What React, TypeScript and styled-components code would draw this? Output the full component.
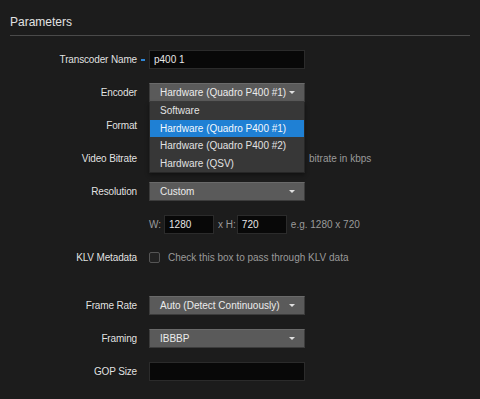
import React from "react";
import styled, { createGlobalStyle } from "styled-components";

const Global = createGlobalStyle`
  html, body { margin: 0; padding: 0; background: #1c1c1c; }
  body { font-family: "Liberation Sans", Arial, sans-serif; font-size: 10px; color: #dcdcdc; }
`;

const Page = styled.div`
  width: 480px;
  height: 399px;
  background: #1c1c1c;
  overflow: hidden;
  padding: 0 10px;
  box-sizing: border-box;
`;

const Title = styled.h2`
  margin: 0;
  padding: 15px 0 6px;
  font-size: 12px;
  font-weight: normal;
  color: #e2e2e2;
  line-height: 14px;
  border-bottom: 1px solid #4a4a4a;
`;

const Form = styled.div`
  display: flex;
  flex-direction: column;
  padding-top: 7px;
`;

const Row = styled.div<{ $gapTop?: number; $h?: number }>`
  display: flex;
  align-items: center;
  height: ${(p) => p.$h ?? 33}px;
  margin-top: ${(p) => p.$gapTop ?? 0}px;
`;

const Label = styled.div`
  width: 127px;
  flex: none;
  text-align: right;
  color: #e4e4e4;
  text-shadow: 0 0 1px rgba(0, 0, 0, 0.8);
  letter-spacing: -0.15px;
`;

const Marker = styled.div`
  width: 12px;
  flex: none;
  display: flex;
  justify-content: flex-start;
  padding-left: 4px;
  box-sizing: border-box;
`;

const Req = styled.span`
  display: block;
  width: 4px;
  height: 2px;
  background: #2f86d6;
`;

const Control = styled.div`
  position: relative;
  display: flex;
  align-items: center;
`;

const Input = styled.div<{ $w?: number }>`
  width: ${(p) => p.$w ?? 156}px;
  height: 19px;
  box-sizing: border-box;
  background: #080808;
  border: 1px solid #2b2b2b;
  color: #e6e6e6;
  padding-left: 4px;
  display: flex;
  align-items: center;
  flex: none;
`;

const Select = styled.div`
  width: 156px;
  height: 19px;
  box-sizing: border-box;
  background: #5a5a5a;
  border: 1px solid #3c3c3c;
  border-top-color: #6a6a6a;
  color: #ececec;
  padding: 0 9px 0 10px;
  display: flex;
  align-items: center;
  justify-content: space-between;
  flex: none;
`;

const Caret = styled.span`
  width: 0;
  height: 0;
  margin-left: auto;
  border-left: 3px solid transparent;
  border-right: 3px solid transparent;
  border-top: 3px solid #e0e0e0;
  flex: none;
`;

const Help = styled.span<{ $ml?: number }>`
  color: #9a9a9a;
  margin-left: ${(p) => p.$ml ?? 4}px;
  white-space: nowrap;
`;

const Small = styled.span<{ $ml?: number; $mr?: number }>`
  color: #9a9a9a;
  margin-left: ${(p) => p.$ml ?? 0}px;
  margin-right: ${(p) => p.$mr ?? 0}px;
  white-space: nowrap;
`;

const Checkbox = styled.span`
  width: 11px;
  height: 11px;
  box-sizing: border-box;
  border: 1px solid #555;
  border-radius: 2px;
  background: #222;
  flex: none;
`;

const Menu = styled.div`
  position: absolute;
  top: 19px;
  left: 0;
  width: 156px;
  box-sizing: border-box;
  background: #373737;
  border: 1px solid #262626;
  border-top: none;
  z-index: 5;
  box-shadow: 0 2px 4px rgba(0, 0, 0, 0.4);
`;

const Item = styled.div<{ $active?: boolean }>`
  height: 17.5px;
  display: flex;
  align-items: center;
  padding-left: 10px;
  color: ${(p) => (p.$active ? "#f4f8fc" : "#e2e2e2")};
  background: ${(p) => (p.$active ? "#1f80d4" : "transparent")};
`;

const options = [
  "Software",
  "Hardware (Quadro P400 #1)",
  "Hardware (Quadro P400 #2)",
  "Hardware (QSV)",
];

export default function App() {
  return (
    <Page>
      <Global />
      <Title>Parameters</Title>
      <Form>
        <Row>
          <Label>Transcoder Name</Label>
          <Marker>
            <Req />
          </Marker>
          <Control>
            <Input>p400 1</Input>
          </Control>
        </Row>
        <Row>
          <Label>Encoder</Label>
          <Marker />
          <Control>
            <Select>
              <span>Hardware (Quadro P400 #1)</span>
              <Caret />
            </Select>
            <Menu>
              {options.map((o) => (
                <Item key={o} $active={o === "Hardware (Quadro P400 #1)"}>
                  {o}
                </Item>
              ))}
            </Menu>
          </Control>
        </Row>
        <Row>
          <Label>Format</Label>
          <Marker />
          <Control>
            <Select>
              <Caret />
            </Select>
          </Control>
        </Row>
        <Row>
          <Label>Video Bitrate</Label>
          <Marker />
          <Control>
            <Input />
            <Help $ml={4}>bitrate in kbps</Help>
          </Control>
        </Row>
        <Row>
          <Label>Resolution</Label>
          <Marker />
          <Control>
            <Select>
              <span>Custom</span>
              <Caret />
            </Select>
          </Control>
        </Row>
        <Row>
          <Label />
          <Marker />
          <Control>
            <Small $mr={3}>W:</Small>
            <Input $w={50}>1280</Input>
            <Small $ml={4} $mr={1}>x H:</Small>
            <Input $w={50}>720</Input>
            <Help $ml={4}>e.g. 1280 x 720</Help>
          </Control>
        </Row>
        <Row>
          <Label>KLV Metadata</Label>
          <Marker />
          <Control>
            <Checkbox />
            <Help $ml={8}>Check this box to pass through KLV data</Help>
          </Control>
        </Row>
        <Row $gapTop={14} $h={34}>
          <Label>Frame Rate</Label>
          <Marker />
          <Control>
            <Select>
              <span>Auto (Detect Continuously)</span>
              <Caret />
            </Select>
          </Control>
        </Row>
        <Row>
          <Label>Framing</Label>
          <Marker />
          <Control>
            <Select>
              <span>IBBBP</span>
              <Caret />
            </Select>
          </Control>
        </Row>
        <Row>
          <Label>GOP Size</Label>
          <Marker />
          <Control>
            <Input />
          </Control>
        </Row>
      </Form>
    </Page>
  );
}
